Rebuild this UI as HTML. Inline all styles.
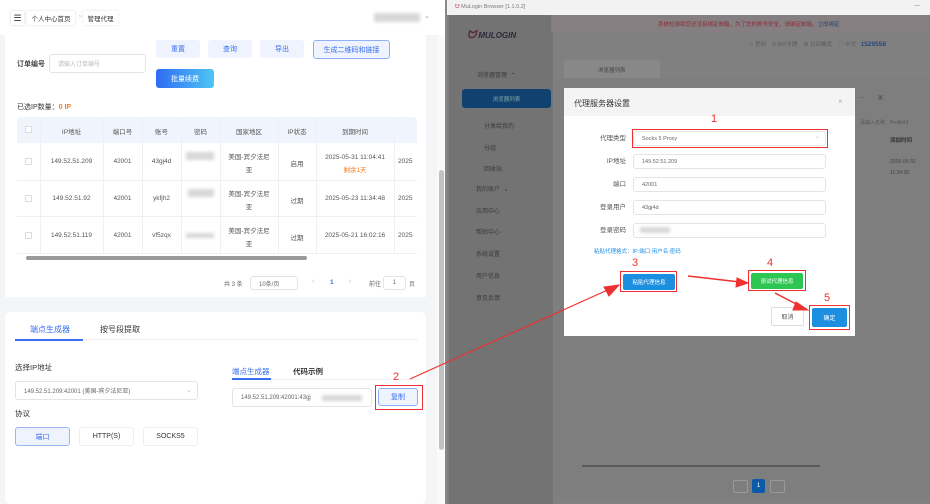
<!DOCTYPE html>
<html><head><meta charset="utf-8"><style>
*{margin:0;padding:0;box-sizing:border-box}
body{width:930px;height:504px;overflow:hidden;position:relative;font-family:"Liberation Sans","Noto Sans CJK SC",sans-serif;font-size:7px;color:#333;background:#f4f5f7}
.a{position:absolute}
.c{display:flex;align-items:center;justify-content:center}
.btn{position:absolute;border-radius:3px;background:#eef3fd;color:#3a6ff0;font-size:7px;display:flex;align-items:center;justify-content:center}
.inp{position:absolute;border:1px solid #e2e4e8;border-radius:3px;background:#fff;font-size:6px;color:#666;padding-left:8px;display:flex;align-items:center}
.td{position:absolute;font-size:6.5px;color:#555;text-align:center}
.blur{position:absolute;background:#d8d8d8;filter:blur(1.5px)}
.red{position:absolute;border:1.5px solid #f03030}
.num{position:absolute;color:#f03030;font-size:11px}
.vl{position:absolute;top:117px;width:1px;height:136px;background:#eef0f4}
</style></head><body>
<!-- LEFT -->
<div class="a" style="left:0;top:0;width:445px;height:35px;background:#fff"></div>
<div class="a c" style="left:11px;top:11px;width:13px;height:14px;background:#fff;box-shadow:0 0 2px #ccc;font-size:9px">☰</div>
<div class="a c" style="left:27px;top:11px;width:48px;height:14px;background:#fff;box-shadow:0 0 2px #ddd;font-size:6.5px">个人中心首页</div>
<div class="a" style="left:79px;top:14px;color:#bbb;font-size:6px">›</div>
<div class="a c" style="left:83px;top:11px;width:35px;height:14px;background:#fff;box-shadow:0 0 2px #ddd;font-size:6.5px">管理代理</div>
<div class="blur" style="left:374px;top:13px;width:46px;height:9px"></div>
<div class="a" style="left:424px;top:12px;color:#999;font-size:7px">⌄</div>
<div class="a" style="left:5px;top:35px;width:421px;height:262px;background:#fff"></div>
<div class="btn" style="left:156px;top:40px;width:44px;height:18px">重置</div>
<div class="btn" style="left:208px;top:40px;width:44px;height:18px">查询</div>
<div class="btn" style="left:260px;top:40px;width:44px;height:18px">导出</div>
<div class="btn" style="left:313px;top:40px;width:77px;height:19px;border:1px solid #8fb0f5">生成二维码和链接</div>
<div class="a" style="left:17px;top:59px;font-size:7px;font-weight:bold;color:#444">订单编号</div>
<div class="inp" style="left:49px;top:54px;width:97px;height:19px;color:#bbb">请输入订单编号</div>
<div class="btn" style="left:156px;top:69px;width:58px;height:19px;background:linear-gradient(90deg,#2f6cf2,#4fc6f5);color:#fff">批量续费</div>
<div class="a" style="left:17px;top:102px;font-size:7px;color:#333">已选IP数量：<span style="color:#ff7a1a;font-weight:bold">0 IP</span></div>
<div class="a" style="left:17px;top:117px;width:400px;height:26px;background:#f0f5fd;border-radius:4px 4px 0 0"></div>
<div class="vl" style="left:40px"></div><div class="vl" style="left:103px"></div><div class="vl" style="left:142px"></div><div class="vl" style="left:181px"></div><div class="vl" style="left:220px"></div><div class="vl" style="left:278px"></div><div class="vl" style="left:316px"></div><div class="vl" style="left:394px"></div>
<div class="a" style="left:25px;top:126px;width:7px;height:7px;border:1px solid #ddd;background:#fff"></div>
<div class="td" style="left:40px;top:126px;width:63px">IP地址</div>
<div class="td" style="left:103px;top:126px;width:39px">端口号</div>
<div class="td" style="left:142px;top:126px;width:39px">账号</div>
<div class="td" style="left:181px;top:126px;width:39px">密码</div>
<div class="td" style="left:220px;top:126px;width:58px">国家地区</div>
<div class="td" style="left:278px;top:126px;width:38px">IP状态</div>
<div class="td" style="left:316px;top:126px;width:78px">到期时间</div>
<div class="a" style="left:17px;top:180px;width:400px;height:1px;background:#eef0f4"></div>
<div class="a" style="left:17px;top:216px;width:400px;height:1px;background:#eef0f4"></div>
<div class="a" style="left:17px;top:253px;width:400px;height:1px;background:#eef0f4"></div>
<div class="a" style="left:25px;top:158px;width:7px;height:7px;border:1px solid #ddd"></div>
<div class="a" style="left:25px;top:195px;width:7px;height:7px;border:1px solid #ddd"></div>
<div class="a" style="left:25px;top:232px;width:7px;height:7px;border:1px solid #ddd"></div>
<div class="td" style="left:40px;top:158px;width:63px">149.52.51.209</div>
<div class="td" style="left:103px;top:158px;width:39px">42001</div>
<div class="td" style="left:142px;top:158px;width:39px">43gj4d</div>
<div class="blur" style="left:186px;top:152px;width:28px;height:8px"></div>
<div class="td" style="left:220px;top:151px;width:58px;line-height:13px">美国-宾夕法尼<br>亚</div>
<div class="td" style="left:278px;top:158px;width:38px">启用</div>
<div class="td" style="left:316px;top:151px;width:78px;line-height:13px">2025-05-31 11:04:41<br><span style="color:#ff7a1a">剩余1天</span></div>
<div class="td" style="left:398px;top:158px">2025</div>
<div class="td" style="left:40px;top:195px;width:63px">149.52.51.92</div>
<div class="td" style="left:103px;top:195px;width:39px">42001</div>
<div class="td" style="left:142px;top:195px;width:39px">ykfjh2</div>
<div class="blur" style="left:188px;top:189px;width:26px;height:8px"></div>
<div class="td" style="left:220px;top:188px;width:58px;line-height:13px">美国-宾夕法尼<br>亚</div>
<div class="td" style="left:278px;top:195px;width:38px">过期</div>
<div class="td" style="left:316px;top:195px;width:78px">2025-05-23 11:34:48</div>
<div class="td" style="left:398px;top:195px">2025</div>
<div class="td" style="left:40px;top:232px;width:63px">149.52.51.119</div>
<div class="td" style="left:103px;top:232px;width:39px">42001</div>
<div class="td" style="left:142px;top:232px;width:39px">vf5zqx</div>
<div class="blur" style="left:186px;top:233px;width:28px;height:5px"></div>
<div class="td" style="left:220px;top:225px;width:58px;line-height:13px">美国-宾夕法尼<br>亚</div>
<div class="td" style="left:278px;top:232px;width:38px">过期</div>
<div class="td" style="left:316px;top:232px;width:78px">2025-05-21 16:02:16</div>
<div class="td" style="left:398px;top:232px">2025</div>
<div class="a" style="left:26px;top:256px;width:281px;height:4px;border-radius:2px;background:#9a9a9a"></div>
<div class="a" style="left:224px;top:279px;font-size:6px;color:#666">共 3 条</div>
<div class="inp" style="left:250px;top:276px;width:48px;height:14px">10条/页</div>
<div class="a" style="left:312px;top:278px;color:#bbb;font-size:7px">‹</div>
<div class="a" style="left:330px;top:279px;color:#3a6ff0;font-size:6.5px;font-weight:bold">1</div>
<div class="a" style="left:349px;top:278px;color:#bbb;font-size:7px">›</div>
<div class="a" style="left:369px;top:279px;font-size:6px;color:#666">前往</div>
<div class="inp" style="left:383px;top:276px;width:23px;height:14px;padding:0;justify-content:center">1</div>
<div class="a" style="left:409px;top:279px;font-size:6px;color:#666">页</div>
<div class="a" style="left:5px;top:312px;width:421px;height:192px;background:#fff;border-radius:6px"></div>
<div class="a" style="left:30px;top:324px;font-size:8px;color:#3a6ff0">端点生成器</div>
<div class="a" style="left:100px;top:324px;font-size:8px;color:#333">按号段提取</div>
<div class="a" style="left:15px;top:339px;width:403px;height:1px;background:#eef0f4"></div>
<div class="a" style="left:15px;top:339px;width:68px;height:2px;background:#3a6ff0"></div>
<div class="a" style="left:15px;top:362px;font-size:7.5px">选择IP地址</div>
<div class="inp" style="left:15px;top:381px;width:183px;height:19px">149.52.51.209:42001 (美国-宾夕法尼亚)</div>
<div class="a" style="left:186px;top:386px;color:#bbb">⌄</div>
<div class="a" style="left:15px;top:408px;font-size:7.5px">协议</div>
<div class="a c" style="left:15px;top:427px;width:55px;height:19px;border:1px solid #9bb7f3;background:#eef3fd;color:#3a6ff0;border-radius:3px;font-size:7px">端口</div>
<div class="a c" style="left:79px;top:427px;width:55px;height:19px;border:1px solid #eee;border-radius:3px;font-size:7px">HTTP(S)</div>
<div class="a c" style="left:143px;top:427px;width:55px;height:19px;border:1px solid #eee;border-radius:3px;font-size:7px">SOCKS5</div>
<div class="a" style="left:232px;top:366px;font-size:7.5px;color:#3a6ff0">端点生成器</div>
<div class="a" style="left:293px;top:366px;font-size:7.5px;font-weight:bold">代码示例</div>
<div class="a" style="left:232px;top:379px;width:186px;height:1px;background:#eef0f4"></div>
<div class="a" style="left:232px;top:378px;width:39px;height:2px;background:#3a6ff0"></div>
<div class="inp" style="left:232px;top:388px;width:140px;height:19px">149.52.51.209:42001:43gj</div>
<div class="blur" style="left:322px;top:395px;width:40px;height:6px"></div>
<div class="btn" style="left:378px;top:388px;width:40px;height:18px;border:1px solid #8fb0f5">复制</div>
<div class="red" style="left:375px;top:385px;width:48px;height:25px"></div>
<div class="num" style="left:393px;top:371px">2</div>
<div class="a" style="left:437px;top:35px;width:8px;height:469px;background:#fafafa"></div>
<div class="a" style="left:439px;top:170px;width:5px;height:280px;background:#c2c2c2;border-radius:3px"></div>
<div class="a" style="left:445px;top:0;width:2px;height:504px;background:#888"></div>
<!-- RIGHT -->
<div class="a" style="left:447px;top:0;width:483px;height:15px;background:#f2f2f2"></div>
<div class="a" style="left:455px;top:4px;font-size:5.5px;color:#777"><span style="color:#c03060">ᗢ</span> MuLogin Browser [1.1.0.2]</div>
<div class="a" style="left:914px;top:3px;color:#888;font-size:6px">—</div>
<div class="a" style="left:447px;top:15px;width:483px;height:489px;background:#808080"></div>
<div class="a" style="left:449px;top:15px;width:104px;height:489px;background:#737373"></div>
<div class="a" style="left:551px;top:15px;width:379px;height:17px;background:#867f81"></div>
<div class="a" style="left:658px;top:20px;font-size:5.5px;color:#8a2a3a">系统检测到您还没有绑定邮箱，为了您的账号安全，请绑定邮箱。<span style="color:#2a3f7a">立即绑定</span></div>
<div class="a" style="left:467px;top:29px;font-size:8px;font-weight:bold;font-style:italic;color:#2a2a3a"><span style="color:#5a2a3a;font-size:11px">ᗢ</span> MULOGIN</div>
<div class="a" style="left:750px;top:40px;font-size:5.5px;color:#5a5a5a">⌂ 官网 &nbsp;&nbsp; ⚲ API令牌 &nbsp;&nbsp; ⚙ 日间模式 &nbsp;&nbsp; ◯ 中文 &nbsp; <b style="color:#2a4a7a;font-size:6.5px">1529558</b></div>
<div class="a" style="left:564px;top:60px;width:96px;height:18px;background:#888;border-radius:3px 3px 0 0"></div>
<div class="a" style="left:598px;top:66px;font-size:5.5px;color:#444">浏览器列表</div>
<div class="a" style="left:555px;top:78px;width:375px;height:420px;background:#7e7e7e"></div>
<div class="a" style="left:477px;top:70px;font-size:6px;color:#3a3a3a">浏览器管理 &nbsp;⌃</div>
<div class="a c" style="left:462px;top:89px;width:89px;height:19px;background:#11416e;border-radius:3px;font-size:5.5px;color:#8aa">浏览器列表</div>
<div class="a" style="left:484px;top:117px;font-size:6px;color:#3a3a3a;line-height:21.7px">分享给我的<br>分组<br>回收站</div>
<div class="a" style="left:476px;top:180px;font-size:6px;color:#3a3a3a;line-height:21.7px">我的账户 &nbsp;⌄<br>应用中心<br>帮助中心<br>系统设置<br>用户信息<br>意见反馈</div>
<div class="a" style="left:858px;top:93px;font-size:6px;color:#444">⋯ &nbsp;&nbsp;&nbsp;&nbsp;&nbsp;&nbsp; ▣</div>
<div class="a" style="left:860px;top:119px;font-size:5px;color:#555">请输入名称、ProfileId</div>
<div class="a" style="left:890px;top:136px;font-size:5.5px;color:#333;font-weight:bold">添加时间</div>
<div class="a" style="left:890px;top:157px;font-size:5px;color:#444;line-height:11px">2025-05-30<br>11:34:38</div>
<div class="a" style="left:582px;top:465px;width:238px;height:2px;background:#5a5a5a"></div>
<div class="a" style="left:733px;top:480px;width:15px;height:13px;border:1px solid #999;border-radius:2px"></div>
<div class="a c" style="left:752px;top:479px;width:13px;height:14px;background:#0d5aa8;border-radius:2px;color:#fff;font-size:6px">1</div>
<div class="a" style="left:770px;top:480px;width:15px;height:13px;border:1px solid #999;border-radius:2px"></div>
<!-- dialog -->
<div class="a" style="left:564px;top:88px;width:291px;height:248px;background:#fff"></div>
<div class="a" style="left:564px;top:88px;width:291px;height:28px;background:#f4f4f4"></div>
<div class="a" style="left:574px;top:98px;font-size:8px;color:#333">代理服务器设置</div>
<div class="a" style="left:838px;top:97px;font-size:8px;color:#aaa">×</div>
<div class="a" style="left:564px;top:127px;width:62px;text-align:right;font-size:6.5px;color:#555;line-height:23px">代理类型<br>IP地址<br>端口<br>登录用户<br>登录密码</div>
<div class="inp" style="left:633px;top:131px;width:193px;height:15px;font-size:5.5px">Socks 5 Proxy</div>
<div class="a" style="left:815px;top:133px;color:#bbb;font-size:6px">⌄</div>
<div class="inp" style="left:633px;top:154px;width:193px;height:15px;font-size:5.5px">149.52.51.209</div>
<div class="inp" style="left:633px;top:177px;width:193px;height:15px;font-size:5.5px">42001</div>
<div class="inp" style="left:633px;top:200px;width:193px;height:15px;font-size:5.5px">43gj4d</div>
<div class="inp" style="left:633px;top:223px;width:193px;height:15px"></div>
<div class="blur" style="left:640px;top:227px;width:30px;height:6px"></div>
<div class="red" style="left:632px;top:129px;width:196px;height:19px"></div>
<div class="num" style="left:711px;top:113px">1</div>
<div class="a" style="left:594px;top:247px;font-size:5.5px;color:#1d8fe0">粘贴代理格式：IP:端口:用户名:密码</div>
<div class="a c" style="left:623px;top:274px;width:52px;height:16px;background:#1d8fe0;color:#fff;font-size:5.5px;border-radius:2px">粘贴代理信息</div>
<div class="red" style="left:620px;top:271px;width:57px;height:21px"></div>
<div class="num" style="left:632px;top:257px">3</div>
<div class="a c" style="left:751px;top:273px;width:52px;height:16px;background:#2dc653;color:#fff;font-size:5.5px;border-radius:2px">测试代理信息</div>
<div class="red" style="left:748px;top:270px;width:58px;height:21px"></div>
<div class="num" style="left:767px;top:257px">4</div>
<div class="a c" style="left:771px;top:307px;width:33px;height:19px;border:1px solid #ddd;font-size:6px;color:#555;border-radius:2px">取消</div>
<div class="a c" style="left:812px;top:308px;width:35px;height:19px;background:#1d8fe0;color:#fff;font-size:6px;border-radius:2px">确定</div>
<div class="red" style="left:809px;top:305px;width:41px;height:25px"></div>
<div class="num" style="left:824px;top:292px">5</div>
<svg class="a" style="left:0;top:0" width="930" height="504">
<g stroke="#f03030" fill="#f03030">
<line x1="410" y1="379" x2="612" y2="288" stroke-width="1.2"/>
<polygon points="619,285 604,287 609,296"/>
<line x1="688" y1="276" x2="740" y2="282" stroke-width="1.5"/>
<polygon points="748,283 737,278 736,287"/>
<line x1="775" y1="293" x2="802" y2="307" stroke-width="1.5"/>
<polygon points="808,310 796,302 793,310"/>
</g></svg>
</body></html>
